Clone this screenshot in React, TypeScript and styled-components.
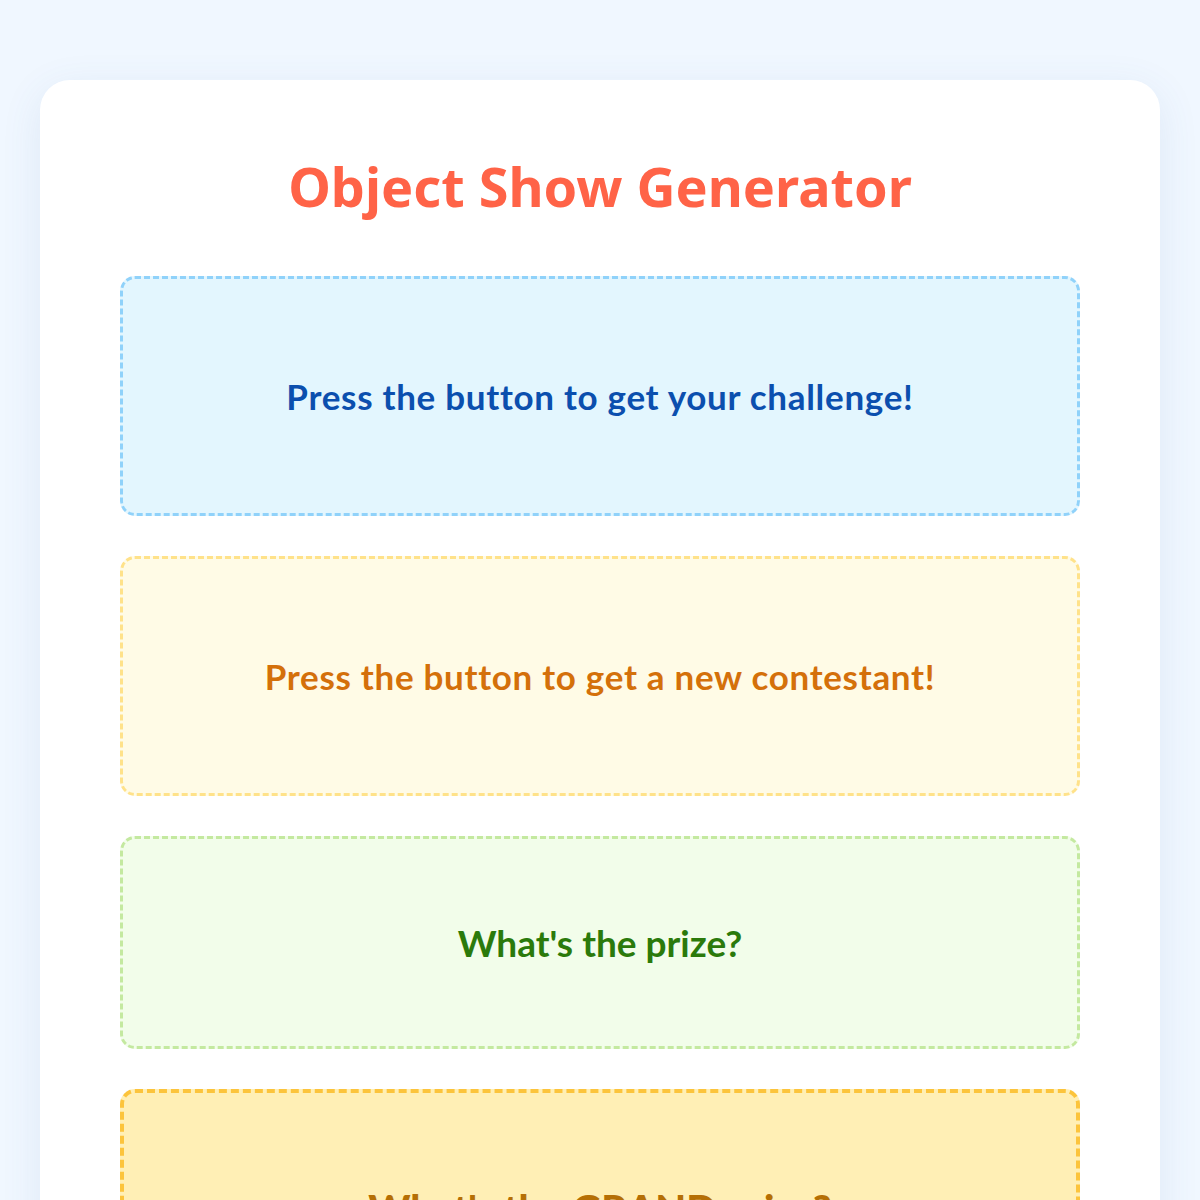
import React from 'react';
import styled, {createGlobalStyle} from "styled-components";

const GlobalStyle = createGlobalStyle`
    * {
        box-sizing: border-box;
    }

    body {
        margin: 0;
        background-color: #f0f7ff;
        font-family: 'Lato', 'Noto Sans', sans-serif;
    }
`

type Tone = "blue" | "yellow" | "green" | "grand";

const tones = {
    blue: {bg: "#e3f6fe", border: "#90d2fa", text: "#0b4fae", size: 35, spacing: 0.7, height: 240, width: 3},
    yellow: {bg: "#fffbe6", border: "#ffe28a", text: "#d4700a", size: 35, spacing: 0.7, height: 240, width: 3},
    green: {bg: "#f2fdea", border: "#c4e9a0", text: "#2b7a0b", size: 37, spacing: 0, height: 213, width: 3},
    grand: {bg: "#ffefb5", border: "#fcc43c", text: "#b56f05", size: 40, spacing: 0, height: 240, width: 4},
};

const cards: { tone: Tone, text: string }[] = [
    {tone: "blue", text: "Press the button to get your challenge!"},
    {tone: "yellow", text: "Press the button to get a new contestant!"},
    {tone: "green", text: "What's the prize?"},
    {tone: "grand", text: "What's the GRAND prize?"},
];

export default function App() {
    return (
        <>
            <GlobalStyle/>
            <Page>
                <Panel>
                    <Title>Object Show Generator</Title>
                    <Stack>
                        {cards.map((c) => (
                            <ResultBox key={c.text} $tone={c.tone}>
                                <ResultText $tone={c.tone}>{c.text}</ResultText>
                            </ResultBox>
                        ))}
                    </Stack>
                </Panel>
            </Page>
        </>
    );
}

const Page = styled.main`
    min-height: 100vh;
    padding: 80px 40px 40px;
`

const Panel = styled.section`
    background-color: #ffffff;
    border-radius: 30px;
    box-shadow: 0 10px 40px rgba(70, 110, 170, 0.1);
    padding: 72px 80px 80px;
`

const Title = styled.h1`
    margin: 0 0 56px;
    text-align: center;
    font-family: 'Noto Sans', sans-serif;
    font-weight: 700;
    font-size: 54px;
    line-height: 68px;
    color: #ff6347;
`

const Stack = styled.div`
    display: flex;
    flex-direction: column;
    gap: 40px;
`

const ResultBox = styled.div<{ $tone: Tone }>`
    display: flex;
    align-items: center;
    justify-content: center;
    min-height: ${({$tone}) => tones[$tone].height}px;
    padding: 20px 40px;
    border-radius: 15px;
    border: ${({$tone}) => tones[$tone].width}px dashed ${({$tone}) => tones[$tone].border};
    background-color: ${({$tone}) => tones[$tone].bg};
`

const ResultText = styled.p<{ $tone: Tone }>`
    margin: 0;
    text-align: center;
    font-weight: ${({$tone}) => $tone === "grand" ? 900 : 700};
    font-size: ${({$tone}) => tones[$tone].size}px;
    letter-spacing: ${({$tone}) => tones[$tone].spacing}px;
    color: ${({$tone}) => tones[$tone].text};
`
